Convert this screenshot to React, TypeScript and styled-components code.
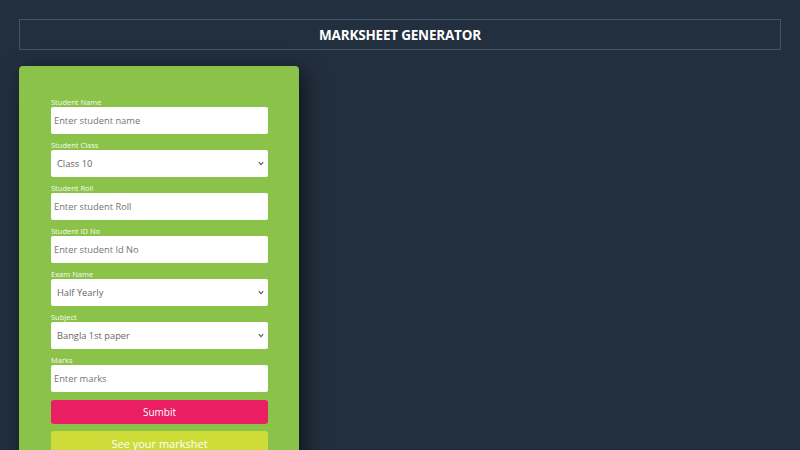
import React from 'react';
import styled, { createGlobalStyle } from 'styled-components';

const GlobalStyle = createGlobalStyle`
    html, body {
        margin: 0;
        padding: 0;
        background-color: #222f3e;
        font-family: "Open Sans", "Noto Sans", sans-serif;
    }
`;

const Page = styled.div`
    padding: 19px 19px 0;
    box-sizing: border-box;
    overflow: hidden;
    height: 450px;
`;

const Header = styled.div`
    height: 31px;
    border: 1px solid #45525f;
    display: flex;
    align-items: center;
    justify-content: center;
    box-sizing: border-box;
    margin-bottom: 16px;
`;

const Title = styled.h1`
    margin: 0;
    font-size: 13.5px;
    font-weight: 700;
    color: #ffffff;
    letter-spacing: -0.2px;
`;

const Card = styled.div`
    width: 280px;
    box-sizing: border-box;
    padding: 31px 31px 30px 32px;
    background-color: #8bc34a;
    border-radius: 4px;
    box-shadow: 6px 6px 22px rgba(0, 0, 0, 0.55);
`;

const Field = styled.div`
    display: flex;
    flex-direction: column;
    margin-bottom: 6px;
`;

const Label = styled.label`
    font-size: 7.5px;
    line-height: 10px;
    color: #f6faf0;
`;

const Input = styled.input`
    height: 27px;
    box-sizing: border-box;
    border: none;
    border-radius: 2px;
    padding: 0 3px;
    font-family: inherit;
    font-size: 9.3px;
    color: #444;
    outline: none;
    background: #fff;

    &::placeholder {
        color: #757575;
    }
`;

const SelectWrap = styled.div`
    position: relative;
`;

const Select = styled.select`
    width: 100%;
    height: 27px;
    box-sizing: border-box;
    border: none;
    border-radius: 2px;
    padding: 0 16px 0 6px;
    font-family: inherit;
    font-size: 9.3px;
    color: #666;
    background: #fff;
    outline: none;
    appearance: none;
    -webkit-appearance: none;
`;

const Chevron = styled.svg`
    position: absolute;
    right: 4px;
    top: 11px;
    width: 6px;
    height: 5px;
    pointer-events: none;
`;

const Button = styled.button<{ tone: 'pink' | 'lime' }>`
    display: block;
    width: 100%;
    height: 24px;
    margin-top: 1px;
    margin-bottom: 7px;
    border: none;
    border-radius: 3px;
    font-family: inherit;
    color: #fff;
    background-color: ${ props => props.tone === 'pink' ? '#e91e63' : '#cddc39' };
    font-size: ${ props => props.tone === 'pink' ? '10px' : '11px' };
`;

const Actions = styled.div`
    padding-top: 1px;
`;

const Dropdown = ({ value, options } : { value : string; options : string[] }) => (
    <SelectWrap>
        <Select defaultValue={ value }>
            { options.map(o => <option key={ o }>{ o }</option>) }
        </Select>
        <Chevron viewBox="0 0 6 5">
            <path d="M0.8 1.2 L3 3.6 L5.2 1.2" fill="none" stroke="#555" strokeWidth="1.1" />
        </Chevron>
    </SelectWrap>
);

const App = () => (
    <Page>
        <GlobalStyle />
        <Header>
            <Title>MARKSHEET GENERATOR</Title>
        </Header>
        <Card>
            <Field>
                <Label>Student Name</Label>
                <Input placeholder="Enter student name" />
            </Field>
            <Field>
                <Label>Student Class</Label>
                <Dropdown value="Class 10" options={ ['Class 10', 'Class 9', 'Class 8'] } />
            </Field>
            <Field>
                <Label>Student Roll</Label>
                <Input placeholder="Enter student Roll" />
            </Field>
            <Field>
                <Label>Student ID No</Label>
                <Input placeholder="Enter student Id No" />
            </Field>
            <Field>
                <Label>Exam Name</Label>
                <Dropdown value="Half Yearly" options={ ['Half Yearly', 'Final'] } />
            </Field>
            <Field>
                <Label>Subject</Label>
                <Dropdown value="Bangla 1st paper" options={ ['Bangla 1st paper', 'Bangla 2nd paper', 'English 1st paper'] } />
            </Field>
            <Field>
                <Label>Marks</Label>
                <Input placeholder="Enter marks" />
            </Field>
            <Actions>
                <Button tone="pink">Sumbit</Button>
                <Button tone="lime">See your markshet</Button>
            </Actions>
        </Card>
    </Page>
);

export default App;
